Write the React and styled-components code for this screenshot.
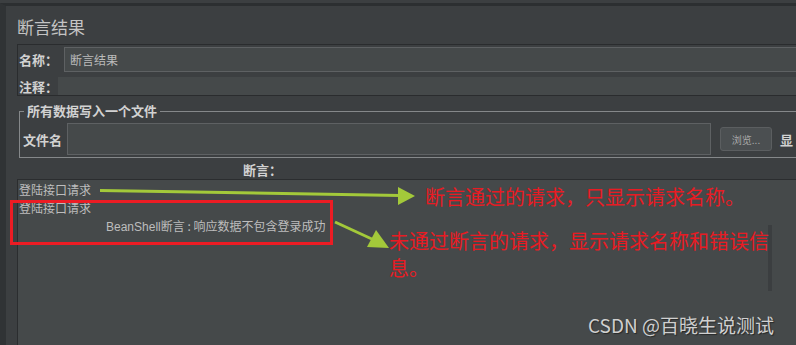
import React from 'react';
import styled, { createGlobalStyle } from 'styled-components';

const GlobalStyle = createGlobalStyle`
  html, body {
    margin: 0;
    padding: 0;
    background: #3c3f41;
    overflow: hidden;
  }
  body {
    font-family: "Noto Sans CJK SC", "Noto Sans", sans-serif;
    color: #bbbbbb;
  }
`;

const Page = styled.div`
  position: relative;
  width: 796px;
  height: 345px;
  overflow: hidden;
  background: #3c3f41;
`;

const Frame = styled.div`
  box-sizing: border-box;
  margin-top: 3px;
  width: 900px;
  height: 342px;
  border-top: 3px solid #2c2f31;
  border-left: 6px solid #303335;
  padding-left: 11px;
  display: flex;
  flex-direction: column;
`;

const Title = styled.div`
  box-sizing: border-box;
  height: 38px;
  padding-top: 4px;
  line-height: 34px;
  font-size: 17px;
  color: #c4c4c4;
`;

const NamePanel = styled.div`
  border-top: 1px solid #2a2c2e;
  border-left: 1px solid #2a2c2e;
  border-bottom: 1px solid #2a2c2e;
  padding-top: 2px;
  display: flex;
  flex-direction: column;
  gap: 5px;
`;

const FieldRow = styled.div`
  display: flex;
  height: ${p => p.$h}px;
`;

const Label = styled.div`
  box-sizing: border-box;
  width: ${p => p.$w}px;
  padding-left: 1px;
  font-size: 13px;
  font-weight: 700;
  color: #d2d2d2;
  display: flex;
  align-items: center;
  white-space: nowrap;
`;

const TextField = styled.div`
  box-sizing: border-box;
  flex: ${p => (p.$w ? 'none' : 1)};
  width: ${p => (p.$w ? `${p.$w}px` : 'auto')};
  background: #45494a;
  border: ${p => (p.$bordered ? '1px solid #5e6163' : 'none')};
  padding-left: 5px;
  font-size: 12px;
  color: #bbbbbb;
  display: flex;
  align-items: center;
`;

const Group = styled.fieldset`
  margin: 7px 0 0 2px;
  padding: 0 0 2px 2px;
  border: 1px solid #85888a;
  min-width: 0;
`;

const Legend = styled.legend`
  margin-left: 2px;
  padding: 0 3px;
  font-size: 13px;
  line-height: 16px;
  font-weight: 700;
  color: #d2d2d2;
`;

const FileRow = styled.div`
  display: flex;
  align-items: stretch;
  height: 32px;
  margin-top: 4px;
`;

const BrowseButton = styled.button`
  box-sizing: border-box;
  align-self: center;
  margin-left: 9px;
  width: 52px;
  height: 24px;
  border-radius: 3px;
  border: 1px solid #5b5e60;
  background: #4b4f51;
  color: #a8a8a8;
  font-family: inherit;
  font-size: 10px;
  padding: 0;
`;

const SideLabel = styled.span`
  align-self: center;
  margin-left: 8px;
  font-size: 13px;
  font-weight: 700;
  color: #d2d2d2;
`;

const AssertLabel = styled.div`
  box-sizing: border-box;
  height: 21px;
  padding: 2px 0 0 226px;
  line-height: 19px;
  font-size: 13px;
  font-weight: 700;
  color: #d2d2d2;
`;

const Results = styled.div`
  flex: 1;
  background: #45494a;
  border-top: 1px solid #2b2d2f;
  border-left: 1px solid #2b2d2f;
  padding-top: 1px;
`;

const ResultRow = styled.div`
  height: 18px;
  line-height: 18px;
  font-size: 12px;
  padding-left: ${p => p.$indent || 1}px;
  color: #bdbdbd;
  white-space: nowrap;
`;

const Latin = styled.span`
  font-family: "Liberation Sans", "Noto Sans", sans-serif;
`;

const RedBox = styled.div`
  position: absolute;
  left: 10px;
  top: 200px;
  width: 323px;
  height: 45px;
  box-sizing: border-box;
  border: 3px solid #ec1c24;
`;

const Note = styled.div`
  position: absolute;
  left: ${p => p.$x}px;
  top: ${p => p.$y}px;
  width: ${p => p.$w}px;
  font-size: 20px;
  line-height: 27px;
  color: #e81b23;
`;

const Arrows = styled.svg`
  position: absolute;
  left: 0;
  top: 0;
  pointer-events: none;
`;

const ScrollThumb = styled.div`
  position: absolute;
  left: 768px;
  top: 225px;
  width: 4px;
  height: 66px;
  background: #3b3e40;
`;

const Watermark = styled.div`
  position: absolute;
  left: 588px;
  top: 312px;
  font-size: 19px;
  line-height: 26px;
  color: #d0d0d0;
  text-shadow: 1px 1px 1px rgba(0, 0, 0, 0.45);
  white-space: nowrap;
`;

const GREEN = '#a3c93a';

export default function App() {
  return (
    <Page>
      <GlobalStyle />
      <Frame>
        <Title>断言结果</Title>
        <NamePanel>
          <FieldRow $h={25}>
            <Label $w={46}>名称：</Label>
            <TextField $bordered>断言结果</TextField>
          </FieldRow>
          <FieldRow $h={18}>
            <Label $w={40}>注释：</Label>
            <TextField />
          </FieldRow>
        </NamePanel>
        <Group>
          <Legend>所有数据写入一个文件</Legend>
          <FileRow>
            <Label $w={45}>文件名</Label>
            <TextField $bordered $w={644} />
            <BrowseButton>浏览...</BrowseButton>
            <SideLabel>显</SideLabel>
          </FileRow>
        </Group>
        <AssertLabel>断言：</AssertLabel>
        <Results>
          <ResultRow>登陆接口请求</ResultRow>
          <ResultRow>登陆接口请求</ResultRow>
          <ResultRow $indent={88}>
            <Latin>BeanShell</Latin>断言 : 响应数据不包含登录成功
          </ResultRow>
        </Results>
      </Frame>

      <ScrollThumb />
      <RedBox />
      <Arrows width="796" height="345" viewBox="0 0 796 345">
        <line x1="100" y1="190.5" x2="400" y2="195.5" stroke={GREEN} strokeWidth="3" />
        <polygon points="398,187 415,196 398,205" fill={GREEN} />
        <line x1="335" y1="222" x2="374" y2="240" stroke={GREEN} strokeWidth="3" />
        <polygon points="376,230 389,248 367,247" fill={GREEN} />
      </Arrows>
      <Note $x={425} $y={183} $w={370}>断言通过的请求，只显示请求名称。</Note>
      <Note $x={389} $y={227} $w={390}>未通过断言的请求，显示请求名称和错误信息。</Note>
      <Watermark>CSDN @百晓生说测试</Watermark>
    </Page>
  );
}
